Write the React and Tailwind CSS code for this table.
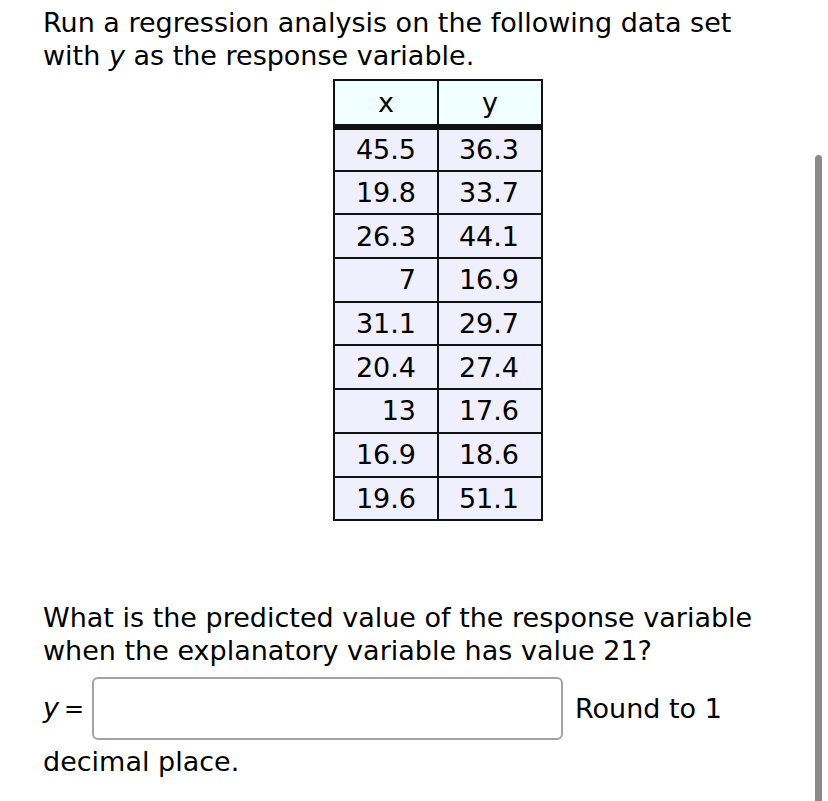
import React from "react";

const rows = [
  ["45.5", "36.3"],
  ["19.8", "33.7"],
  ["26.3", "44.1"],
  ["7", "16.9"],
  ["31.1", "29.7"],
  ["20.4", "27.4"],
  ["13", "17.6"],
  ["16.9", "18.6"],
  ["19.6", "51.1"],
];

function App() {
  return (
    <div className="relative min-h-[801px] w-full overflow-hidden bg-white pl-[43px] pt-[6px] font-['DejaVu_Sans',sans-serif] text-[27px] leading-[33px] text-black">
      <p>
        <span className="block">Run a regression analysis on the following data set</span>
        <span className="block">
          with <i>y</i> as the response variable.
        </span>
      </p>

      <div className="mt-[7px] pl-[290px]">
        <table className="border-collapse border-2 border-[#111]">
          <thead>
            <tr className="h-[47px] bg-[#f0ffff]">
              <th className="w-[104px] border-2 border-b-[6px] border-[#111] p-0 text-center font-normal">x</th>
              <th className="w-[104px] border-2 border-b-[6px] border-[#111] p-0 text-center font-normal">y</th>
            </tr>
          </thead>
          <tbody>
            {rows.map((r, i) => (
              <tr key={i} className="h-[43.7px] bg-[#efeffd]">
                <td className="border-2 border-[#111] p-0 pr-[21px] text-right">{r[0]}</td>
                <td className="border-2 border-[#111] p-0 pr-[22px] text-right">{r[1]}</td>
              </tr>
            ))}
          </tbody>
        </table>
      </div>

      <p className="mt-[80px]">
        <span className="block">What is the predicted value of the response variable</span>
        <span className="block">when the explanatory variable has value 21?</span>
      </p>

      <div className="mt-[10px] flex items-center">
        <span className="flex w-[49px] items-baseline">
          <i>y</i>
          <span className="ml-[5px] text-[24px]">=</span>
        </span>
        <input
          type="text"
          className="h-[63px] w-[471px] rounded-[6px] border-2 border-[#a3a3a3] bg-white px-2 outline-none"
        />
        <span className="ml-[12px]">Round to 1</span>
      </div>
      <p className="mt-[5px]">decimal place.</p>

      <div className="absolute bottom-0 right-[6px] top-[155px] w-[7px] rounded-t-full bg-[#8a8a8a]" />
    </div>
  );
}

export default App;
